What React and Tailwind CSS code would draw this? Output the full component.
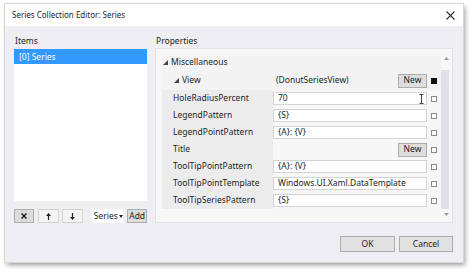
import React from 'react';

const rows = [
  { name: 'HoleRadiusPercent', value: '70', cursor: true },
  { name: 'LegendPattern', value: '{S}' },
  { name: 'LegendPointPattern', value: '{A}: {V}' },
  { name: 'Title', button: true },
  { name: 'ToolTipPointPattern', value: '{A}: {V}' },
  { name: 'ToolTipPointTemplate', value: 'Windows.UI.Xaml.DataTemplate' },
  { name: 'ToolTipSeriesPattern', value: '{S}' },
];

function Expander() {
  return (
    <svg width="5" height="5" viewBox="0 0 5 5" className="shrink-0">
      <polygon points="5,0 5,5 0,5" fill="#444" />
    </svg>
  );
}

function NewButton() {
  return (
    <div className="w-[29px] h-[14px] flex items-center justify-center bg-[#dddddd] border border-[#adadad] text-[8.5px] leading-none text-[#222]">
      New
    </div>
  );
}

function Square({ filled }) {
  return (
    <div className="w-[14px] flex items-center justify-center">
      <div className={filled ? 'w-[6px] h-[6px] bg-[#111]' : 'w-[6px] h-[6px] border border-[#8a8a8a] bg-white'} />
    </div>
  );
}

function SmallButton({ children, pressed }) {
  return (
    <div
      className={
        pressed
          ? 'w-[20px] h-[14px] flex items-center justify-center bg-[#dcdcdc] border border-[#adadad]'
          : 'w-[21px] h-[14px] flex items-center justify-center bg-[#f4f4f4] border border-[#d2d2d2]'
      }
    >
      {children}
    </div>
  );
}

export default function App() {
  return (
    <div className="w-[474px] h-[272px] bg-white pt-[4px] pl-[5px] font-['Noto_Sans',sans-serif] text-[#1e1e1e] overflow-hidden">
      <div className="w-[458px] h-[258px] flex flex-col shadow-[0_0_0_1px_#d6d6d6,2px_3px_5px_rgba(0,0,0,0.4)]">
        {/* title bar */}
        <div className="h-[22px] bg-white flex items-center justify-between pl-[7px] pr-[8px]">
          <span className="text-[8px] leading-none">Series Collection Editor: Series</span>
          <svg width="9" height="9" viewBox="0 0 9 9">
            <path d="M0.5 0.5 L8.5 8.5 M8.5 0.5 L0.5 8.5" stroke="#333" strokeWidth="1.1" />
          </svg>
        </div>

        {/* body */}
        <div className="flex-1 bg-[#efeef2] flex flex-col pl-[9px] pr-[10px] pt-[8px]">
          <div className="flex gap-[8px]">
            {/* items column */}
            <div className="w-[133px] flex flex-col">
              <div className="h-[15px] text-[8.5px] leading-[14px] pl-[1px]">Items</div>
              <div className="h-[152px] bg-white">
                <div className="h-[15px] bg-[#3399ff] text-white text-[8.5px] leading-[15px] pl-[5px]">[0] Series</div>
              </div>
              <div className="mt-[8px] flex items-center">
                <SmallButton pressed>
                  <svg width="6" height="6" viewBox="0 0 6 6">
                    <path d="M0.5 0.5 L5.5 5.5 M5.5 0.5 L0.5 5.5" stroke="#222" strokeWidth="1.5" />
                  </svg>
                </SmallButton>
                <div className="ml-[4px]">
                  <SmallButton>
                    <svg width="5" height="7" viewBox="0 0 5 7">
                      <path d="M2.5 1 L2.5 7" stroke="#222" strokeWidth="1.2" />
                      <polygon points="0,3 2.5,0 5,3" fill="#222" />
                    </svg>
                  </SmallButton>
                </div>
                <div className="ml-[3px]">
                  <SmallButton>
                    <svg width="5" height="7" viewBox="0 0 5 7">
                      <path d="M2.5 0 L2.5 6" stroke="#222" strokeWidth="1.2" />
                      <polygon points="0,4 2.5,7 5,4" fill="#222" />
                    </svg>
                  </SmallButton>
                </div>
                <div className="ml-[9px] w-[32px] h-[14px] bg-white flex items-center pl-[2px] text-[8.5px] leading-none gap-[1px]">
                  <span>Series</span>
                  <svg width="4" height="3" viewBox="0 0 4 3">
                    <polygon points="0,0 4,0 2,3" fill="#222" />
                  </svg>
                </div>
                <div className="ml-[4px] w-[20px] h-[14px] flex items-center justify-center bg-[#dcdcdc] border border-[#adadad] text-[8.5px] leading-none">
                  Add
                </div>
              </div>
            </div>

            {/* properties column */}
            <div className="w-[298px] flex flex-col">
              <div className="h-[14px] text-[8.5px] leading-[14px] pl-[1px]">Properties</div>
              <div className="h-[175px] bg-[#f7f7f8] border border-[#e2e2e6] flex">
                <div className="flex-1 pl-[6px] pt-[5px] flex flex-col">
                  <div className="h-[17px] flex items-center gap-[3px] pl-[1px] bg-[#f3f3f3] text-[8.5px]">
                    <Expander />
                    <span>Miscellaneous</span>
                  </div>
                  <div className="h-[19px] flex items-center bg-[#f3f3f3] text-[8.5px]">
                    <div className="w-[111px] flex items-center gap-[3px] pl-[12px]">
                      <Expander />
                      <span>View</span>
                    </div>
                    <div className="w-[154px] flex items-center pl-[3px]">
                      <span>(DonutSeriesView)</span>
                      <div className="ml-auto">
                        <NewButton />
                      </div>
                    </div>
                    <Square filled />
                  </div>
                  {rows.map((r) => (
                    <div key={r.name} className="h-[17px] flex items-center text-[8.5px]">
                      <div className="w-[111px] h-full flex items-center pl-[11px] bg-[#ececec]">{r.name}</div>
                      <div className="w-[154px] h-full flex items-center">
                        {r.button ? (
                          <div className="ml-auto">
                            <NewButton />
                          </div>
                        ) : (
                          <div className="w-full h-[13px] bg-white border border-[#d4d4d4] flex items-center pl-[4px] pr-[2px] leading-none">
                            <span className="flex-1">{r.value}</span>
                            {r.cursor && (
                              <svg width="5" height="10" viewBox="0 0 5 10">
                                <path d="M0.5 0.5 H4.5 M2.5 0.5 V9.5 M0.5 9.5 H4.5" stroke="#333" strokeWidth="0.9" fill="none" />
                              </svg>
                            )}
                          </div>
                        )}
                      </div>
                      <Square />
                    </div>
                  ))}
                </div>
                {/* scrollbar */}
                <div className="w-[12px] bg-[#f7f7f8] flex flex-col items-center pt-[8px] pb-[6px]">
                  <svg width="5" height="3" viewBox="0 0 5 3">
                    <polygon points="0,3 2.5,0 5,3" fill="#9a9a9a" />
                  </svg>
                  <div className="mt-[10px] w-[8px] flex-1 bg-[#e0e1e8] self-start" />
                  <svg width="5" height="3" viewBox="0 0 5 3" className="mt-[4px]">
                    <polygon points="0,0 5,0 2.5,3" fill="#9a9a9a" />
                  </svg>
                </div>
              </div>
            </div>
          </div>

          <div className="mt-[13px] flex justify-end gap-[4px]">
            <div className="w-[55px] h-[16px] bg-[#e1e1e1] border border-[#adadad] flex items-center justify-center text-[8.5px] leading-none">OK</div>
            <div className="w-[54px] h-[16px] bg-[#e1e1e1] border border-[#adadad] flex items-center justify-center text-[8.5px] leading-none">Cancel</div>
          </div>
        </div>
      </div>
    </div>
  );
}
